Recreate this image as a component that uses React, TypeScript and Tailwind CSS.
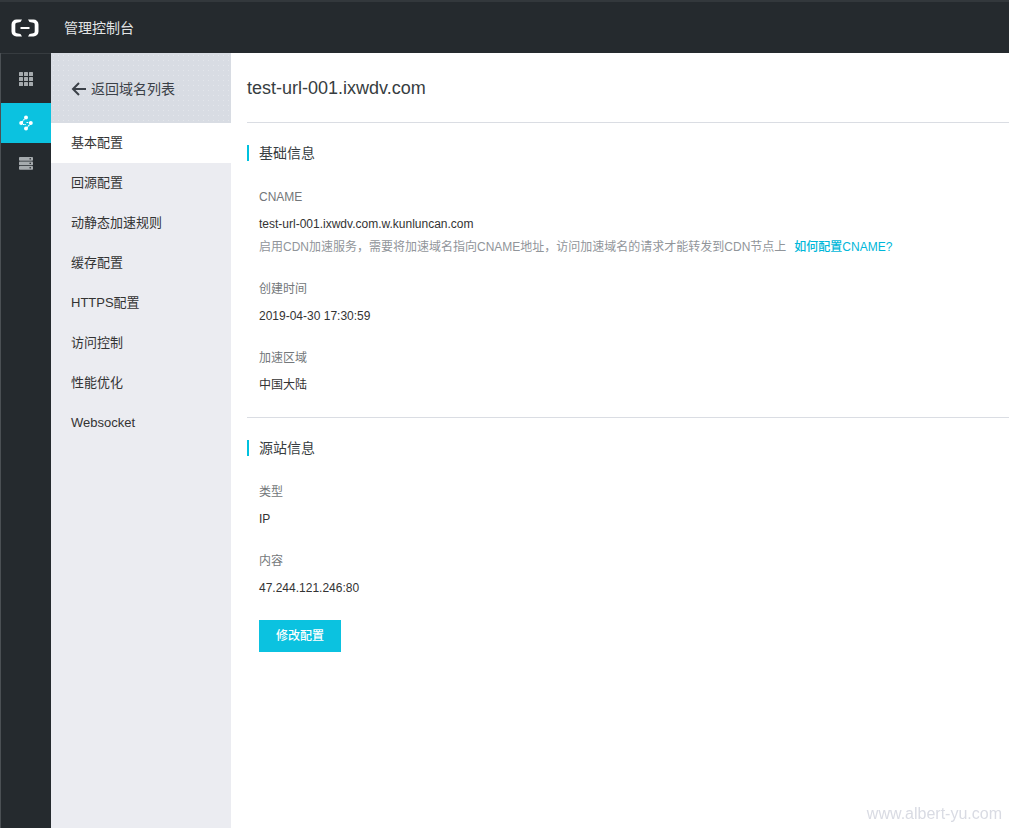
import type { ReactNode } from "react";

const menuItems = [
  "基本配置",
  "回源配置",
  "动静态加速规则",
  "缓存配置",
  "HTTPS配置",
  "访问控制",
  "性能优化",
  "Websocket",
];

const LogoIcon = () => (
  <svg width="28" height="18" viewBox="0 0 28 18" fill="none" aria-hidden="true">
    <path d="M11 .5H5.500A5 5 0 0 0 .5 5.500v7a5 5 0 0 0 5 5H11L9.500 15l-3.800-.8a1.800 1.800 0 0 1-1.400-1.800V5.600a1.800 1.800 0 0 1 1.400-1.800L9.500 3z" fill="#fff" />
    <path d="M17 .5h5.500a5 5 0 0 1 5 5v7a5 5 0 0 1-5 5H17l1.500-2.500 3.800-.8a1.800 1.800 0 0 0 1.400-1.800V5.600a1.800 1.800 0 0 0-1.400-1.800L18.500 3z" fill="#fff" />
    <path d="M9.500 8h9v2h-9z" fill="#fff" />
  </svg>
);

const GridIcon = () => (
  <svg width="14" height="14" viewBox="0 0 14 14" fill="#a6abae" aria-hidden="true">
    {[0, 5, 10].map((y) =>
      [0, 5, 10].map((x) => <rect key={`${x}-${y}`} x={x} y={y} width="4" height="4" rx="0.5" />)
    )}
  </svg>
);

const CdnIcon = () => (
  <svg width="14" height="16" viewBox="0 0 14 16" aria-hidden="true">
    <path d="M7 2.500 2 8M4 9.500h3M7.500 7.500H11M12 8.500 7 13.500" fill="none" stroke="#fff" strokeWidth="1.200" strokeDasharray="1.600 0.700" />
    <g fill="#fff">
      <circle cx="7" cy="2.500" r="2" />
      <circle cx="2.200" cy="8" r="2" />
      <circle cx="11.800" cy="8" r="2" />
      <circle cx="7" cy="13.500" r="2" />
    </g>
  </svg>
);

const ServerIcon = () => (
  <svg width="14" height="13" viewBox="0 0 14 13" aria-hidden="true">
    {[0, 4.5, 9].map((y) => (
      <g key={y}>
        <rect y={y} width="14" height="3.800" rx="0.800" fill="#a6abae" />
        <rect x="10.500" y={y + 1.2} width="1.500" height="1.200" fill="#252a2e" />
      </g>
    ))}
  </svg>
);

const BackIcon = () => (
  <svg width="16" height="14" viewBox="0 0 16 14" fill="none" stroke="#3b4148" strokeWidth="2" aria-hidden="true">
    <path d="M8 1 2 7l6 6M2 7h13" />
  </svg>
);

const Section = ({ title, children }: { title: string; children: ReactNode }) => (
  <section className="border-t border-[#dadde3] pt-5">
    <h2 className="flex items-center gap-2.5 text-sm leading-5 text-[#373d41]">
      <span className="h-4 w-0.5 bg-[#00c1de]" />
      {title}
    </h2>
    <dl className="mt-6 pl-3 text-xs leading-5">{children}</dl>
  </section>
);

const Field = ({ label, children }: { label: string; children: ReactNode }) => (
  <div className="pb-[22px]">
    <dt className="text-[#73777a]">{label}</dt>
    <dd className="mt-[7px] text-[#333]">{children}</dd>
  </div>
);

const App = () => {
  return (
    <div className="flex min-h-screen flex-col bg-white font-['Liberation_Sans','Noto_Sans_CJK_SC',sans-serif] text-[#333]">
      <header className="flex h-[53px] items-center border-t-2 border-[#33383c] bg-[#252a2e] text-white">
        <a href="#" aria-label="首页" className="flex pl-[11px]">
          <LogoIcon />
        </a>
        <a href="#" className="ml-[25px] text-sm leading-5 text-[#e2e4e5]">管理控制台</a>
      </header>

      <div className="flex grow">
        {/* Product rail */}
        <nav aria-label="产品" className="flex w-[51px] shrink-0 flex-col border-l border-[#4b5054] bg-[#252a2e]">
          <a href="#" aria-label="产品与服务" className="flex h-[50px] items-center justify-center border-t border-[#373c40]">
            <GridIcon />
          </a>
          <a href="#" aria-label="CDN" className="flex h-10 items-center justify-center bg-[#0bc2e0]">
            <CdnIcon />
          </a>
          <a href="#" aria-label="云服务器" className="flex h-10 items-center justify-center">
            <ServerIcon />
          </a>
        </nav>

        {/* Domain menu */}
        <aside className="w-[180px] shrink-0 bg-[#ebecf1]">
          <a
            href="#"
            className="flex h-[70px] items-center gap-1 bg-[#d8dce3] bg-[radial-gradient(#e3e6eb_0.5px,transparent_1px)] bg-[size:5px_5px] pt-0.5 pl-5 text-sm text-[#3b4148]"
          >
            <BackIcon />
            返回域名列表
          </a>
          <nav aria-label="域名配置">
            {menuItems.map((item, i) => (
              <a
                key={item}
                href="#"
                className={`flex h-10 items-center pl-5 text-[13px] leading-5 text-[#333] ${i === 0 ? "bg-white" : ""}`}
              >
                {item}
              </a>
            ))}
          </nav>
        </aside>

        <main className="min-w-0 grow pl-4">
          <h1 className="flex h-[69px] items-center text-lg text-[#373d41]">test-url-001.ixwdv.com</h1>

          <Section title="基础信息">
            <Field label="CNAME">
              test-url-001.ixwdv.com.w.kunluncan.com
              <p className="mt-[3px] text-[#91959a]">
                启用CDN加速服务，需要将加速域名指向CNAME地址，访问加速域名的请求才能转发到CDN节点上
                <a href="#" className="ml-2 font-medium text-[#00b7d9]">如何配置CNAME?</a>
              </p>
            </Field>
            <Field label="创建时间">2019-04-30 17:30:59</Field>
            <Field label="加速区域">中国大陆</Field>
          </Section>

          <Section title="源站信息">
            <Field label="类型">IP</Field>
            <Field label="内容">47.244.121.246:80</Field>
          </Section>
          <button type="button" className="ml-3 h-8 bg-[#0bc2e0] px-[17px] text-xs font-medium text-white">
            修改配置
          </button>
        </main>
      </div>

      <footer className="fixed right-[7px] bottom-1 text-base leading-5 text-[#d9dbe3]">www.albert-yu.com</footer>
    </div>
  );
};

export default App;
